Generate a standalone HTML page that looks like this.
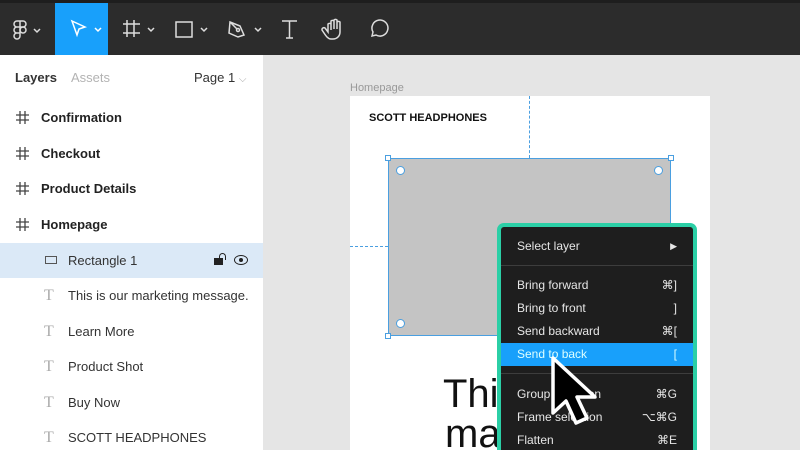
<!DOCTYPE html>
<html style="width:800px;height:450px;overflow:hidden"><head><style>
*{margin:0;padding:0;box-sizing:border-box}
body{width:800px;height:450px;overflow:hidden;font-family:"Liberation Sans",sans-serif;background:#e5e5e5;position:relative}
.a{position:absolute}
.tb{left:0;top:0;width:800px;height:55px;background:#2c2c2c}
.lp{left:0;top:55px;width:263px;height:395px;background:#fff}
.row{position:absolute;left:0;width:263px;height:35px;font-size:13px;color:#333;line-height:35px}
.row b{font-weight:bold;color:#222}
.mi{position:absolute;left:501px;width:192px;height:23px;line-height:23px;font-size:12px;color:#e6e6e6;padding-left:16px}
.mi span{position:absolute;right:16px}
svg{position:absolute}
.hs{position:absolute;left:16px;top:11px}
</style></head><body>
<div class="a tb"></div>
<div class="a" style="left:0;top:0;width:800px;height:3px;background:#1e1e1e"></div>
<div class="a" style="left:55px;top:3px;width:53px;height:52px;background:#18a0fb"></div>
<svg width="800" height="55" style="left:0;top:0" fill="none" stroke="#ddd" stroke-width="1.5">
<path d="M17 21h3v6h-3a3 3 0 0 1 0-6zM20 21h3a3 3 0 0 1 0 6h-3zM17 27h3v6h-3a3 3 0 0 1 0-6zM17 33h3v3a3 3 0 1 1-3-3z"/>
<circle cx="23" cy="30" r="3"/>
<path d="M34 29l3 3 3-3"/>
<path d="M72 21l13 6-6 2-2 6z" stroke="#fff"/><path d="M95 28l3 3 3-3" stroke="#fff"/>
<path d="M127 20v17M134 20v17M123 24h17M123 33h17"/><path d="M148 28l3 3 3-3"/>
<rect x="176" y="22" width="16" height="15"/><path d="M201 28l3 3 3-3"/>
<path d="M230 22l10 4 4 9-6 2-9-4zM230 22l7 7"/><circle cx="238" cy="30" r="1.5"/><path d="M255 28l3 3 3-3"/>
<path d="M282 21h15M289.5 21v17M286 38h7"/>
<path d="M328 32v-8a2 2 0 0 1 3 0v6v-9a2 2 0 0 1 3 0v8v-9a2 2 0 0 1 3 0v9v-7a2 2 0 0 1 3 0v10c0 4-3 7-7 7h-2c-3 0-5-3-7-6l-2-3a2 2 0 0 1 3-2z"/>
<path d="M372 36l1-4a8 8 0 1 1 3 3z"/>
</svg>
<div class="a lp"></div>
<div class="a" style="left:15px;top:70px;font-size:13px;font-weight:bold;color:#333">Layers</div>
<div class="a" style="left:71px;top:70px;font-size:13px;color:#b3b3b3">Assets</div>
<div class="a" style="left:194px;top:70px;font-size:13px;color:#333">Page 1 <span style="color:#aaa;font-size:10px">⌵</span></div>
<svg width="0" height="0"><defs><symbol id="h" viewBox="0 0 13 13"><path d="M4 0v13M9 0v13M0 4h13M0 9h13" stroke="#444" stroke-width="1.3" fill="none"/></symbol></defs></svg>
<div class="row" style="top:100px"><svg class="hs" width="13" height="13"><use href="#h"/></svg><b class="a" style="left:41px">Confirmation</b></div>
<div class="row" style="top:136px"><svg class="hs" width="13" height="13"><use href="#h"/></svg><b class="a" style="left:41px">Checkout</b></div>
<div class="row" style="top:171px"><svg class="hs" width="13" height="13"><use href="#h"/></svg><b class="a" style="left:41px">Product Details</b></div>
<div class="row" style="top:207px"><svg class="hs" width="13" height="13"><use href="#h"/></svg><b class="a" style="left:41px">Homepage</b></div>
<div class="row" style="top:243px;background:#dbe9f7"><span class="a" style="left:45px;top:13px;width:12px;height:8px;border:1.5px solid #555"></span><span class="a" style="left:68px">Rectangle 1</span>
<span class="a" style="left:214px;top:15px;width:9px;height:7px;background:#222"></span><span class="a" style="left:219px;top:10px;width:7px;height:7px;border:1.5px solid #222;border-bottom:none;border-radius:4px 4px 0 0"></span>
<span class="a" style="left:234px;top:12px;width:14px;height:10px;border:1.5px solid #222;border-radius:50%"></span><span class="a" style="left:239px;top:15px;width:4px;height:4px;background:#222;border-radius:50%"></span></div>
<div class="row" style="top:278px"><span class="a" style="left:44px;font-family:'Liberation Serif';font-size:16px;color:#aaa">T</span><span class="a" style="left:68px">This is our marketing message.</span></div>
<div class="row" style="top:314px"><span class="a" style="left:44px;font-family:'Liberation Serif';font-size:16px;color:#aaa">T</span><span class="a" style="left:68px">Learn More</span></div>
<div class="row" style="top:349px"><span class="a" style="left:44px;font-family:'Liberation Serif';font-size:16px;color:#aaa">T</span><span class="a" style="left:68px">Product Shot</span></div>
<div class="row" style="top:385px"><span class="a" style="left:44px;font-family:'Liberation Serif';font-size:16px;color:#aaa">T</span><span class="a" style="left:68px">Buy Now</span></div>
<div class="row" style="top:420px"><span class="a" style="left:44px;font-family:'Liberation Serif';font-size:16px;color:#aaa">T</span><span class="a" style="left:68px">SCOTT HEADPHONES</span></div>

<div class="a" style="left:350px;top:82px;font-size:11px;color:#999">Homepage</div>
<div class="a" style="left:350px;top:96px;width:360px;height:354px;background:#fff"></div>
<div class="a" style="left:369px;top:112px;font-size:11px;font-weight:bold;color:#111">SCOTT HEADPHONES</div>
<div class="a" style="left:529px;top:96px;height:62px;border-left:1px dashed #4a9fe0"></div>
<div class="a" style="left:350px;top:246px;width:38px;border-top:1px dashed #4a9fe0"></div>
<div class="a" style="left:388px;top:158px;width:283px;height:178px;background:#c4c4c4;border:1.5px solid #4a9fe0"></div>
<div class="a" style="left:385px;top:155px;width:6px;height:6px;background:#fff;border:1px solid #4a9fe0"></div>
<div class="a" style="left:668px;top:155px;width:6px;height:6px;background:#fff;border:1px solid #4a9fe0"></div>
<div class="a" style="left:385px;top:333px;width:6px;height:6px;background:#fff;border:1px solid #4a9fe0"></div>
<div class="a" style="left:396px;top:166px;width:9px;height:9px;background:#fff;border:1.5px solid #4a9fe0;border-radius:50%"></div>
<div class="a" style="left:654px;top:166px;width:9px;height:9px;background:#fff;border:1.5px solid #4a9fe0;border-radius:50%"></div>
<div class="a" style="left:396px;top:319px;width:9px;height:9px;background:#fff;border:1.5px solid #4a9fe0;border-radius:50%"></div>
<div class="a" style="left:443px;top:374px;width:60px;height:76px;overflow:hidden;white-space:nowrap;font-size:40px;color:#111;line-height:40px">This is<br><span style="margin-left:2px">market</span></div>

<div class="a" style="left:497px;top:223px;width:200px;height:227px;background:#2bcfa6;border-radius:7px 7px 0 0"></div>
<div class="a" style="left:501px;top:227px;width:192px;height:223px;background:#1e1e1e;border-radius:3px 3px 0 0"></div>
<div class="mi" style="top:235px">Select layer<span style="font-size:9px">▶</span></div>
<div class="a" style="left:501px;top:265px;width:192px;height:1px;background:#3d3d3d"></div>
<div class="mi" style="top:274px">Bring forward<span>⌘]</span></div>
<div class="mi" style="top:297px">Bring to front<span>]</span></div>
<div class="mi" style="top:320px">Send backward<span>⌘[</span></div>
<div class="mi" style="top:343px;background:#18a0fb;color:#dff">Send to back<span>[</span></div>
<div class="a" style="left:501px;top:373px;width:192px;height:1px;background:#3d3d3d"></div>
<div class="mi" style="top:383px">Group selection<span>⌘G</span></div>
<div class="mi" style="top:406px">Frame selection<span>⌥⌘G</span></div>
<div class="mi" style="top:429px;height:21px;overflow:hidden">Flatten<span>⌘E</span></div>
<svg width="60" height="80" style="left:548px;top:355px"><path d="M5 3L5 58L18 46L28 68L39 63L29 42L47 42Z" fill="#000" stroke="#fff" stroke-width="3.5" stroke-linejoin="round"/></svg>
</body></html>
